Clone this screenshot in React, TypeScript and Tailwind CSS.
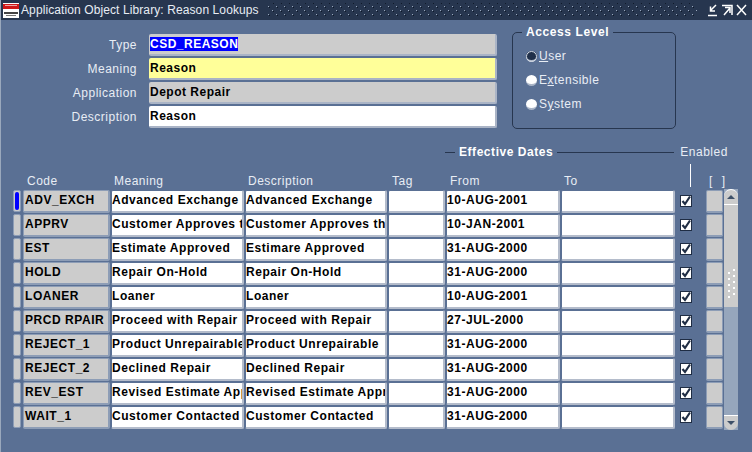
import React from 'react';

const font = { fontFamily: '"Liberation Sans", Arial, sans-serif' };

interface Row {
  code: string;
  meaning: string;
  description: string;
  from: string;
}

const rows: Row[] = [
  { code: 'ADV_EXCH', meaning: 'Advanced Exchange', description: 'Advanced Exchange', from: '10-AUG-2001' },
  { code: 'APPRV', meaning: 'Customer Approves the Repair', description: 'Customer Approves the Repair', from: '10-JAN-2001' },
  { code: 'EST', meaning: 'Estimate Approved', description: 'Estimare Approved', from: '31-AUG-2000' },
  { code: 'HOLD', meaning: 'Repair On-Hold', description: 'Repair On-Hold', from: '31-AUG-2000' },
  { code: 'LOANER', meaning: 'Loaner', description: 'Loaner', from: '10-AUG-2001' },
  { code: 'PRCD RPAIR', meaning: 'Proceed with Repair', description: 'Proceed with Repair', from: '27-JUL-2000' },
  { code: 'REJECT_1', meaning: 'Product Unrepairable', description: 'Product Unrepairable', from: '31-AUG-2000' },
  { code: 'REJECT_2', meaning: 'Declined Repair', description: 'Declined Repair', from: '31-AUG-2000' },
  { code: 'REV_EST', meaning: 'Revised Estimate Approved', description: 'Revised Estimate Approved', from: '31-AUG-2000' },
  { code: 'WAIT_1', meaning: 'Customer Contacted', description: 'Customer Contacted', from: '31-AUG-2000' },
];

const Cell: React.FC<{ width: string; gray?: boolean; children?: React.ReactNode }> = ({ width, gray, children }) => (
  <div
    className={`${width} h-[23px] shrink-0 overflow-hidden whitespace-nowrap rounded-[2px] border-2 border-t-[1px] border-l-[1px] text-[12px] leading-[19px] font-bold tracking-[0.55px] text-black ${
      gray ? 'border-[#8d9db6] bg-[#cccccc] pl-[1px]' : 'border-[#5a7094] border-r-[#b4bccb] border-b-[#b4bccb] bg-white'
    }`}
  >
    {children}
  </div>
);

const FormRow: React.FC<{ label: string; bg: string; children: React.ReactNode }> = ({ label, bg, children }) => (
  <div className="flex h-[24px] items-start">
    <div className="w-[136px] pt-[3px] text-right text-[12px] leading-[16px] tracking-[0.5px] text-[#e8edf4]">{label}</div>
    <div className={`ml-[12px] h-[22px] w-[348px] rounded-[2px] border-r-2 border-b-2 border-[#aab4c6] pl-[1px] text-[12px] leading-[21px] font-bold tracking-[0.5px] text-black ${bg}`}>
      {children}
    </div>
  </div>
);

const Radio: React.FC<{ selected?: boolean; before: string; key_: string; after: string }> = ({ selected, before, key_, after }) => (
  <div className="flex h-[24px] items-center">
    <span className={`h-[11px] w-[11px] rounded-full border-b-2 ${selected ? 'border-[#a9b4c6] bg-[#20304a] outline-1 -outline-offset-1 outline-[#d5dbe5]' : 'border-[#a9b4c6] bg-white'}`} />
    <span className="ml-[2px] text-[12px] tracking-[0.5px] text-[#e8edf4]">
      {before}
      <span className="underline">{key_}</span>
      {after}
    </span>
  </div>
);

const Check = () => (
  <svg width="12" height="12" viewBox="0 0 12 12" className="shrink-0">
    <rect x="0.5" y="0.5" width="11" height="11" fill="#fff" stroke="#1f2d44" />
    <path d="M2.5 6 L5 9 L10 1.5" fill="none" stroke="#1f2d44" strokeWidth="2.2" />
  </svg>
);

export default function App() {
  return (
    <div className="flex h-[452px] w-[752px] flex-col overflow-hidden border-l-[1px] border-[#9aa8bc] bg-[#5a7094]" style={font}>
      {/* title bar */}
      <div className="flex h-[20px] shrink-0 items-center bg-[#27364f] pl-[2px] text-[#e8edf4]">
        <svg width="16" height="15" viewBox="0 0 16 15" className="shrink-0">
          <rect width="16" height="15" fill="#fff" />
          <rect x="0" y="1" width="16" height="5" fill="#d01818" />
          <rect x="2" y="2" width="12" height="1" fill="#fff" opacity="0.6" />
          <rect x="1" y="9" width="14" height="2" fill="#444" />
          <rect x="3" y="12" width="10" height="1" fill="#777" />
        </svg>
        <span className="ml-[2px] text-[12px] tracking-[0.1px] whitespace-nowrap">Application Object Library: Reason Lookups</span>
        <svg className="mr-[10px] ml-[9px] h-[14px] flex-1">
          <defs>
            <pattern id="dots" width="8" height="8" patternUnits="userSpaceOnUse">
              <rect x="0" y="3" width="1" height="1" fill="#9aa8bc" />
              <rect x="4" y="7" width="1" height="1" fill="#9aa8bc" />
              <rect x="1" y="4" width="1" height="1" fill="#101a2a" />
              <rect x="5" y="0" width="1" height="1" fill="#101a2a" />
            </pattern>
          </defs>
          <rect width="100%" height="100%" fill="url(#dots)" />
        </svg>
        <svg width="40" height="14" viewBox="0 0 40 14" className="mr-[5px] shrink-0" fill="none" stroke="#fff">
          <path d="M1 12.5H10M9 2L4 7M3.5 3.5V8H8" strokeWidth="1.5" />
          <path d="M15 2.5H25V12M17 12L23 5M18 4.5H23V10" strokeWidth="1.5" />
          <path d="M30 2L39 12M39 2L30 12" strokeWidth="1.5" />
        </svg>
      </div>

      {/* header form */}
      <div className="flex pt-[14px]">
        <div className="flex w-[511px] flex-col">
          <FormRow label="Type" bg="bg-[#cccccc]">
            <span className="bg-[#0000ff] text-white">CSD_REASON</span>
          </FormRow>
          <FormRow label="Meaning" bg="bg-[#ffff99]">Reason</FormRow>
          <FormRow label="Application" bg="bg-[#cccccc]">Depot Repair</FormRow>
          <FormRow label="Description" bg="bg-white">Reason</FormRow>
        </div>
        <div className="relative -mt-[2px] h-[97px] w-[164px] rounded-[5px] border border-[#27364f] pt-[11px] pl-[13px]">
          <span className="absolute -top-[9px] left-[9px] bg-[#5a7094] px-[4px] text-[12px] leading-[16px] font-bold tracking-[0.6px] text-white">Access Level</span>
          <Radio selected before="" key_="U" after="ser" />
          <Radio before="E" key_="x" after="tensible" />
          <Radio before="S" key_="y" after="stem" />
        </div>
      </div>

      {/* group headers */}
      <div className="mt-[13px] flex h-[18px] items-center pl-[444px] text-[12px]">
        <span className="h-px w-[10px] bg-[#27364f]" />
        <span className="mx-[4px] font-bold tracking-[0.55px] text-white">Effective Dates</span>
        <span className="h-px w-[117px] bg-[#27364f]" />
        <span className="ml-[6px] tracking-[0.5px] text-[#e8edf4]">Enabled</span>
      </div>

      {/* column headers */}
      <div className="relative flex h-[29px] items-end text-[12px] tracking-[0.5px] text-[#e8edf4]">
        <span className="ml-[26px] w-[87px]">Code</span>
        <span className="w-[134px]">Meaning</span>
        <span className="w-[144px]">Description</span>
        <span className="w-[58px]">Tag</span>
        <span className="w-[114px]">From</span>
        <span className="w-[145px]">To</span>
        <span className="tracking-[3px]">[ ]</span>
        <span className="absolute top-[3px] left-[689px] h-[23px] w-px bg-white" />
      </div>

      {/* table */}
      <div className="flex pl-[12px]">
        <div className="flex flex-col">
          {rows.map((row, i) => (
            <div key={row.code} className="flex h-[24px] items-start">
              <div className="mr-[2px] flex h-[22px] w-[8px] items-center justify-center rounded-[2px] border border-[#8d9db6] bg-[#cccccc]">
                {i === 0 && <span className="h-[18px] w-[4px] rounded-[2px] bg-[#0000ff]" />}
              </div>
              <Cell width="w-[87px]" gray>{row.code}</Cell>
              <span className="w-px" />
              <Cell width="w-[133px]">{row.meaning}</Cell>
              <span className="w-px" />
              <Cell width="w-[142px]">{row.description}</Cell>
              <span className="w-px" />
              <Cell width="w-[57px]" />
              <span className="w-px" />
              <Cell width="w-[114px]">{row.from}</Cell>
              <span className="w-px" />
              <Cell width="w-[114px]" />
              <div className="ml-[5px] flex h-[23px] w-[26px] items-center pb-[1px]"><Check /></div>
              <div className="h-[23px] w-[17px] rounded-[2px] border border-b-2 border-[#8d9db6] bg-[#cccccc]" />
            </div>
          ))}
        </div>

        {/* scrollbar */}
        <div className="-mt-[1px] ml-[1px] flex h-[241px] w-[14px] flex-col items-center bg-[#96a6bc]">
          <div className="flex h-[15px] w-full items-center justify-center rounded-t-[7px] border-t border-white bg-[#cccccc]">
            <span className="h-0 w-0 border-x-[4px] border-b-[4px] border-x-transparent border-b-[#3e5068]" />
          </div>
          <div className="flex h-[103px] w-full flex-col items-center justify-end border-t border-white bg-[#cccccc] pb-[8px]">
            <svg width="10" height="30" viewBox="0 0 10 30">
              {[0, 6, 12, 18, 24].map(y => (
                <g key={y} fill="#fff">
                  <rect x="2" y={y + 3} width="2" height="2" />
                  <rect x="7" y={y} width="2" height="2" />
                </g>
              ))}
            </svg>
          </div>
          <div className="flex-1" />
          <div className="flex h-[15px] w-full items-center justify-center rounded-b-[7px] border-t border-white bg-[#cccccc]">
            <span className="h-0 w-0 border-x-[4px] border-t-[4px] border-x-transparent border-t-[#3e5068]" />
          </div>
        </div>
      </div>
    </div>
  );
}
